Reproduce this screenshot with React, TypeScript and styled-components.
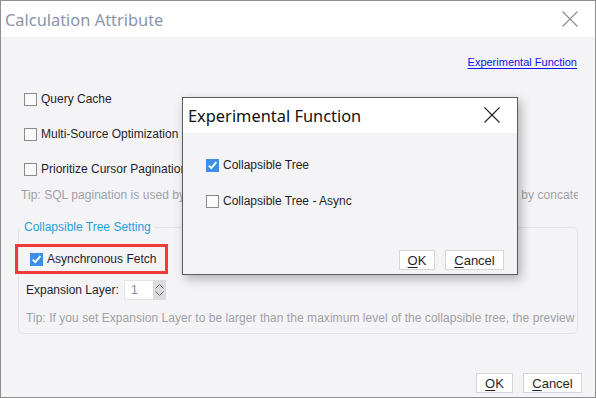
import * as React from 'react';
import {createGlobalStyle, styled} from 'styled-components';

const GlobalStyle = createGlobalStyle`
    html, body {
        margin: 0;
        padding: 0;
        background: #ffffff;
    }
    * {
        box-sizing: border-box;
    }
`;

const StyledDialog = styled.div`
    position: relative;
    width: 596px;
    height: 398px;
    border: 1px solid #8e8e8e;
    background: #f4f4f6;
    display: flex;
    flex-direction: column;
    overflow: hidden;
    font-family: 'Liberation Sans', Arial, sans-serif;
    font-size: 12px;
    color: #1f1f2a;
`;

const StyledHeader = styled.div<{$height: number}>`
    height: ${props => props.$height}px;
    flex: none;
    background: #ffffff;
    display: flex;
    align-items: center;
    justify-content: space-between;
`;

const StyledTitle = styled.div<{$color: string; $indent: number}>`
    margin-left: ${props => props.$indent}px;
    font-family: 'Noto Sans', 'Open Sans', sans-serif;
    font-size: 16.4px;
    color: ${props => props.$color};
    white-space: nowrap;
`;

const StyledClose = styled.button<{$color: string; $right: number}>`
    margin-right: ${props => props.$right}px;
    width: 17px;
    height: 17px;
    padding: 0;
    border: none;
    background: transparent;
    display: flex;
    color: ${props => props.$color};
`;

const StyledBody = styled.div`
    flex: 1;
    display: flex;
    flex-direction: column;
    padding: 0 17px 0 23px;
    min-height: 0;
`;

const StyledLinkRow = styled.div`
    margin-top: 15px;
    height: 20px;
    display: flex;
    justify-content: flex-end;
    align-items: center;
    padding-right: 1px;
`;

const StyledLink = styled.a`
    font-size: 11px;
    color: #1010f0;
    text-decoration: underline;
    text-underline-offset: 2px;
    cursor: pointer;
`;

const StyledOption = styled.label<{$top: number}>`
    margin-top: ${props => props.$top}px;
    height: 20px;
    display: flex;
    align-items: center;
    gap: 4px;
    white-space: nowrap;
`;

const StyledBox = styled.span<{$checked: boolean}>`
    width: 13px;
    height: 13px;
    flex: none;
    display: flex;
    align-items: center;
    justify-content: center;
    border: 1px solid ${props => (props.$checked ? '#3c8ee6' : '#8b8b8b')};
    background: ${props => (props.$checked ? '#3c8ee6' : '#fbfbfb')};
`;

const StyledTip = styled.div<{$top: number; $left: number}>`
    margin-top: ${props => props.$top}px;
    margin-left: ${props => props.$left}px;
    height: 20px;
    line-height: 20px;
    color: #a0a0a6;
    letter-spacing: 0.05px;
    white-space: nowrap;
    overflow: hidden;
`;

const StyledFieldset = styled.fieldset`
    margin: 14px 0 0 -6px;
    padding: 0 1px 5px 7px;
    border: 1px solid #e3e3e7;
    border-radius: 5px;
    min-width: 0;
`;

const StyledLegend = styled.legend`
    margin-left: -5px;
    padding: 0 3px;
    height: 16px;
    line-height: 16px;
    font-size: 12px;
    color: #25a2e2;
`;

const StyledHighlight = styled.label`
    margin: 9px 0 0 -11px;
    width: 153px;
    height: 30px;
    border: 3px solid #f03a3c;
    padding-left: 12px;
    display: flex;
    align-items: center;
    gap: 4px;
    white-space: nowrap;
`;

const StyledLayerRow = styled.div`
    margin-top: 6px;
    height: 20px;
    display: flex;
    align-items: center;
    gap: 5px;
    white-space: nowrap;
`;

const StyledSpinner = styled.div`
    display: flex;
    height: 20px;
`;

const StyledSpinInput = styled.div`
    width: 29px;
    height: 20px;
    background: #ffffff;
    border: 1px solid #e4e4e8;
    border-right: none;
    color: #8890aa;
    padding-left: 6px;
    line-height: 18px;
    font-size: 13px;
`;

const StyledSpinArrows = styled.div`
    width: 13px;
    height: 20px;
    background: #dcdcdf;
    display: flex;
    flex-direction: column;
    align-items: center;
    justify-content: center;
    gap: 2px;
`;

const StyledFooter = styled.div<{$pad: number}>`
    flex: none;
    display: flex;
    justify-content: flex-end;
    gap: 10px;
    padding: 0 ${props => props.$pad}px 4px 0;
`;

const StyledButton = styled.button<{$width: number}>`
    width: ${props => props.$width}px;
    height: 20px;
    padding: 0;
    background: #ffffff;
    border: 1px solid #d6d6da;
    font-family: 'Liberation Sans', Arial, sans-serif;
    font-size: 13px;
    color: #1f1f2a;
    u {
        text-underline-offset: 2px;
    }
`;

const StyledModal = styled.div`
    position: absolute;
    left: 181px;
    top: 96px;
    width: 336px;
    height: 178px;
    border: 1px solid #5c5c5c;
    background: #f4f4f6;
    box-shadow: 3px 4px 10px rgba(0, 0, 0, 0.28);
    display: flex;
    flex-direction: column;
`;

const StyledModalBody = styled.div`
    flex: 1;
    padding: 0 0 0 23px;
    display: flex;
    flex-direction: column;
`;

function Cross({size}: {size: number}) {
    return (
        <svg width={size} height={size} viewBox="0 0 16 16">
            <path d="M0.5 0.5 L15.5 15.5 M15.5 0.5 L0.5 15.5" stroke="currentColor" strokeWidth="1.1" />
        </svg>
    );
}

function CheckBox({checked}: {checked: boolean}) {
    return (
        <StyledBox $checked={checked}>
            {checked && (
                <svg width="11" height="11" viewBox="0 0 11 11">
                    <path
                        d="M1.8 5.6 L4.3 8.2 L9.4 2.2"
                        fill="none"
                        stroke="#ffffff"
                        strokeWidth="1.8"
                    />
                </svg>
            )}
        </StyledBox>
    );
}

function Chevron({up}: {up: boolean}) {
    return (
        <svg width="9" height="5" viewBox="0 0 9 5">
            <path
                d={up ? 'M0.5 4.5 L4.5 0.5 L8.5 4.5' : 'M0.5 0.5 L4.5 4.5 L8.5 0.5'}
                fill="none"
                stroke="#6f6f74"
                strokeWidth="1"
            />
        </svg>
    );
}

export default function App() {
    return (
        <React.Fragment>
            <GlobalStyle />
            <StyledDialog>
                <StyledHeader $height={36}>
                    <StyledTitle $color="#8a94a8" $indent={4}>
                        Calculation Attribute
                    </StyledTitle>
                    <StyledClose $color="#8a8a8a" $right={16}>
                        <Cross size={16} />
                    </StyledClose>
                </StyledHeader>
                <StyledBody>
                    <StyledLinkRow>
                        <StyledLink>Experimental Function</StyledLink>
                    </StyledLinkRow>
                    <StyledOption $top={17}>
                        <CheckBox checked={false} />
                        Query Cache
                    </StyledOption>
                    <StyledOption $top={15}>
                        <CheckBox checked={false} />
                        Multi-Source Optimization
                    </StyledOption>
                    <StyledOption $top={15}>
                        <CheckBox checked={false} />
                        Prioritize Cursor Pagination
                    </StyledOption>
                    <StyledTip $top={6} $left={-3}>
                        Tip: SQL pagination is used by default. If the cursor pagination is prioritized, all
                        data is paged by concatenating the sort columns.
                    </StyledTip>
                    <StyledFieldset>
                        <StyledLegend>Collapsible Tree Setting</StyledLegend>
                        <StyledHighlight>
                            <CheckBox checked={true} />
                            Asynchronous Fetch
                        </StyledHighlight>
                        <StyledLayerRow>
                            Expansion Layer:
                            <StyledSpinner>
                                <StyledSpinInput>1</StyledSpinInput>
                                <StyledSpinArrows>
                                    <Chevron up={true} />
                                    <Chevron up={false} />
                                </StyledSpinArrows>
                            </StyledSpinner>
                        </StyledLayerRow>
                        <StyledTip $top={8} $left={0}>
                            Tip: If you set Expansion Layer to be larger than the maximum level of the
                            collapsible tree, the preview will take longer to load.
                        </StyledTip>
                    </StyledFieldset>
                </StyledBody>
                <StyledFooter $pad={13}>
                    <StyledButton $width={37}>
                        <u>O</u>K
                    </StyledButton>
                    <StyledButton $width={59}>
                        <u>C</u>ancel
                    </StyledButton>
                </StyledFooter>

                <StyledModal>
                    <StyledHeader $height={35}>
                        <StyledTitle $color="#111111" $indent={5}>
                            Experimental Function
                        </StyledTitle>
                        <StyledClose $color="#222222" $right={16}>
                            <Cross size={16} />
                        </StyledClose>
                    </StyledHeader>
                    <StyledModalBody>
                        <StyledOption $top={22}>
                            <CheckBox checked={true} />
                            Collapsible Tree
                        </StyledOption>
                        <StyledOption $top={16}>
                            <CheckBox checked={false} />
                            Collapsible Tree - Async
                        </StyledOption>
                    </StyledModalBody>
                    <StyledFooter $pad={13}>
                        <StyledButton $width={36}>
                            <u>O</u>K
                        </StyledButton>
                        <StyledButton $width={59}>
                            <u>C</u>ancel
                        </StyledButton>
                    </StyledFooter>
                </StyledModal>
            </StyledDialog>
        </React.Fragment>
    );
}
